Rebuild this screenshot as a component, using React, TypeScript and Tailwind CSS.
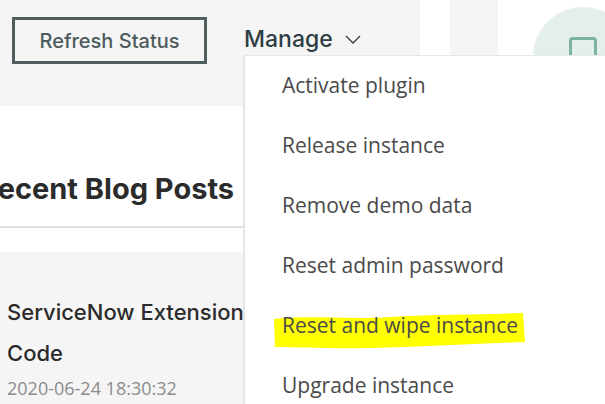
const menuItems = [
  "Activate plugin",
  "Release instance",
  "Remove demo data",
  "Reset admin password",
  "Reset and wipe instance",
  "Upgrade instance",
];

const Highlight = () => (
  <svg
    className="absolute left-[-11px] top-[1px] w-[256px] h-[40px]"
    viewBox="0 0 256 40"
    fill="#ffff00"
  >
    <path d="M3,8 C40,4 80,9 120,6 C170,3 210,4 252,2 L254,31 C200,33 150,36 100,37 C60,38 30,36 4,36 Z" />
  </svg>
);

// Manage dropdown, open over the page
const ManageMenu = () => {
  return (
    <div className="absolute left-[243px] top-[55px] right-0 bottom-[-10px] bg-white border-l-2 border-t border-[#e6e6e6]">
      {menuItems.map((item) => (
        <div key={item} className="h-[60px] flex items-center pl-[37px]">
          <span className="relative text-[21px] text-[#4a4a4a] font-['Open_Sans',sans-serif]">
            {item === "Reset and wipe instance" && <Highlight />}
            <span className="relative">{item}</span>
          </span>
        </div>
      ))}
    </div>
  );
};

export default function App() {
  return (
    <div className="relative w-[605px] h-[404px] overflow-hidden bg-white font-['Inter',sans-serif]">
      <div className="flex">
        <main className="w-[420px] shrink-0">
          <header className="h-[106px] bg-[#f5f5f5] flex items-start pt-[17px] pl-3">
            <button className="w-[195px] h-[47px] border-[3px] border-[#4f5e5f] text-[20px] text-[#4d5b5c] font-medium">
              Refresh Status
            </button>
            <div className="ml-[37px] mt-[5px] flex items-center gap-[12px] text-[23px] font-medium text-[#2e3d44]">
              Manage
              <svg width="16" height="9" viewBox="0 0 16 9" fill="none" stroke="#2e3d44" strokeWidth="1.3">
                <path d="M1,1 L8,8 L15,1" />
              </svg>
            </div>
          </header>

          <section className="w-[243px]">
            <h2 className="-ml-[21px] mt-[65px] text-[29px] font-bold text-[#2b2b2b] whitespace-nowrap leading-[36px]">
              Recent Blog Posts
            </h2>
            <hr className="mt-[19px] border-0 border-t-2 border-[#e0e0e0]" />
            <article className="mt-[24px] w-[420px] bg-[#f5f5f5] pl-[7px] pt-[40px] pb-6">
              <h3 className="max-w-[330px] text-[22px] font-medium text-[#2b2b2b] leading-[41px]">
                ServiceNow Extension for VS Code
              </h3>
              <p className="mt-[1px] text-[18px] text-[#8c8c8c] font-['Open_Sans',sans-serif]">
                2020-06-24 18:30:32
              </p>
            </article>
          </section>
        </main>

        <div className="w-[30px] shrink-0" />
        <div className="w-[48px] h-[60px] shrink-0 bg-[#f5f5f5]" />
        <div className="ml-[35px] mt-[7px] w-[100px] h-[100px] shrink-0 rounded-full bg-[#e4efec] pl-[36px] pt-[30px]">
          <div className="w-[28px] h-[32px] rounded-[4px] border-[3px] border-[#7db4a1]" />
        </div>
      </div>

      <ManageMenu />
    </div>
  );
}
